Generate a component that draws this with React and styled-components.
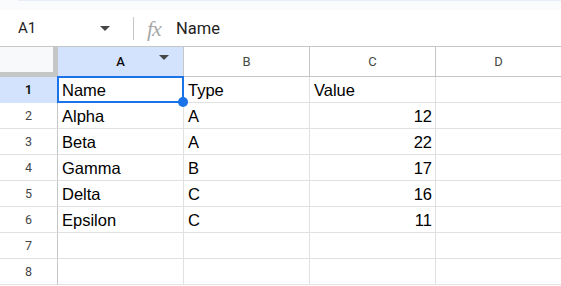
import React from "react"
import styled, { createGlobalStyle } from "styled-components"

const GlobalStyle = createGlobalStyle`
  html, body {
    margin: 0;
    padding: 0;
    background: #fff;
    font-family: Roboto, "Liberation Sans", Arial, sans-serif;
    overflow: hidden;
  }
`

const columns = ["A", "B", "C", "D"]

const rows = [
  ["Name", "Type", "Value"],
  ["Alpha", "A", 12],
  ["Beta", "A", 22],
  ["Gamma", "B", 17],
  ["Delta", "C", 16],
  ["Epsilon", "C", 11],
  [],
  [],
]

const Page = styled.div`
  width: 561px;
  height: 286px;
  overflow: hidden;
  background: #fff;
`

const TopStrip = styled.div`
  height: 10px;
  background: #f9fbfd;
  position: relative;

  &::before {
    content: "";
    position: absolute;
    top: 0;
    left: 18px;
    right: 0;
    height: 1px;
    background: #e8eef8;
  }
`

const FormulaBar = styled.div`
  height: 36px;
  display: flex;
  align-items: center;
  background: #fff;
`

const NameBox = styled.div`
  width: 119px;
  box-sizing: border-box;
  padding-left: 18px;
  padding-right: 9px;
  display: flex;
  align-items: center;
  justify-content: space-between;
  font-family: Roboto, "Liberation Sans", sans-serif;
  font-size: 15px;
  color: #1f1f1f;
`

const Caret = styled.span`
  width: 0;
  height: 0;
  border-left: ${p => p.$size}px solid transparent;
  border-right: ${p => p.$size}px solid transparent;
  border-top: ${p => p.$size}px solid ${p => p.$color || "#444746"};
`

const Divider = styled.div`
  width: 1px;
  height: 23px;
  background: #c7c7c7;
  margin-left: 14px;
  margin-right: 13px;
`

const Fx = styled.span`
  font-family: "Liberation Serif", serif;
  font-style: italic;
  font-size: 22px;
  line-height: 1;
  color: #a8a8a8;
  width: 29px;
  letter-spacing: -1px;
  margin-top: 1px;
`

const FormulaText = styled.span`
  font-family: Roboto, "Liberation Sans", sans-serif;
  font-size: 16.5px;
  color: #1f1f1f;
`

const Grid = styled.div`
  display: grid;
  grid-template-columns: 58px 126px 126px 126px 126px;
  grid-auto-rows: 26px;
  grid-template-rows: 30px;
  border-top: 1px solid #c4c7c5;
  position: relative;
`

const Corner = styled.div`
  box-sizing: border-box;
  background: #f8f9fa;
  border-right: 5px solid #c4c7c5;
  border-bottom: 5px solid #c4c7c5;
`

const ColHeader = styled.div`
  box-sizing: border-box;
  display: flex;
  align-items: center;
  justify-content: center;
  position: relative;
  background: ${p => (p.$active ? "#d3e3fd" : "#fff")};
  border-right: 1px solid #c4c7c5;
  border-bottom: 1px solid #c4c7c5;
  font-family: Roboto, "Liberation Sans", sans-serif;
  font-size: 13px;
  font-weight: ${p => (p.$active ? 500 : 400)};
  color: ${p => (p.$active ? "#0b0b0b" : "#444746")};
`

const HeaderCaret = styled.span`
  position: absolute;
  right: 14px;
  top: 13px;
`

const RowHeader = styled.div`
  box-sizing: border-box;
  display: flex;
  align-items: center;
  justify-content: center;
  background: ${p => (p.$active ? "#d3e3fd" : "#fff")};
  border-right: 1px solid #c4c7c5;
  border-bottom: 1px solid ${p => (p.$active ? "#d3e3fd" : "#e1e1e1")};
  font-family: Roboto, "Liberation Sans", sans-serif;
  font-size: 12.5px;
  font-weight: ${p => (p.$active ? 600 : 400)};
  color: ${p => (p.$active ? "#0b0b0b" : "#444746")};
`

const Cell = styled.div`
  box-sizing: border-box;
  display: flex;
  align-items: center;
  justify-content: ${p => (p.$numeric ? "flex-end" : "flex-start")};
  padding: 2px 3px 0 4px;
  border-right: 1px solid #e1e1e1;
  border-bottom: 1px solid #e1e1e1;
  font-family: "Liberation Sans", Arial, sans-serif;
  font-size: 16.5px;
  color: #000;
  white-space: nowrap;
  overflow: hidden;
`

const Selection = styled.div`
  position: absolute;
  left: 57px;
  top: 29px;
  width: 127px;
  height: 27px;
  box-sizing: border-box;
  border: 2px solid #1a73e8;
  pointer-events: none;

  &::after {
    content: "";
    position: absolute;
    right: -6px;
    bottom: -6px;
    width: 10px;
    height: 10px;
    border-radius: 50%;
    background: #1a73e8;
  }
`

export default function App() {
  return (
    <Page>
      <GlobalStyle />
      <TopStrip />
      <FormulaBar>
        <NameBox>
          <span>A1</span>
          <Caret $size={5} />
        </NameBox>
        <Divider />
        <Fx>fx</Fx>
        <FormulaText>Name</FormulaText>
      </FormulaBar>
      <Grid>
        <Corner />
        {columns.map((c, i) => (
          <ColHeader key={c} $active={i === 0}>
            {c}
            {i === 0 && (
              <HeaderCaret>
                <Caret $size={5} />
              </HeaderCaret>
            )}
          </ColHeader>
        ))}
        {rows.map((row, r) => (
          <React.Fragment key={r}>
            <RowHeader $active={r === 0}>{r + 1}</RowHeader>
            {columns.map((c, ci) => {
              const v = row[ci]
              return (
                <Cell key={c} $numeric={typeof v === "number"}>
                  {v}
                </Cell>
              )
            })}
          </React.Fragment>
        ))}
        <Selection />
      </Grid>
    </Page>
  )
}
